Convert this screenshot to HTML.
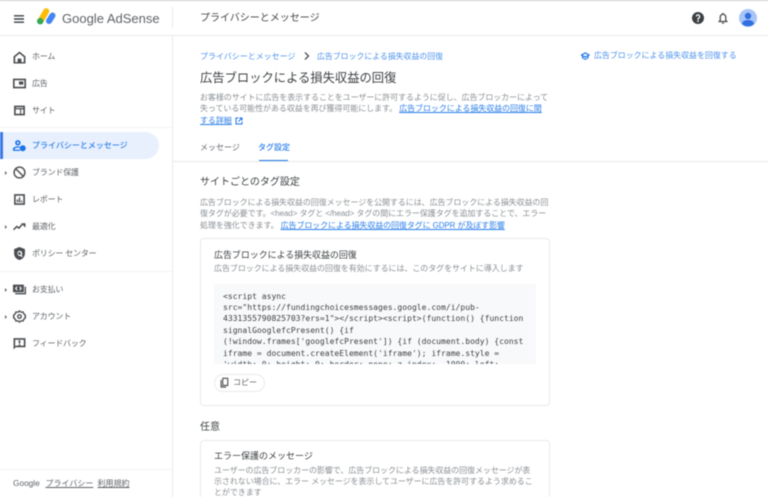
<!DOCTYPE html>
<html lang="ja"><head><meta charset="utf-8">
<style>
html,body{margin:0;padding:0;background:#fff;width:768px;height:497px;overflow:hidden}
body{font-family:"Liberation Sans","Noto Sans CJK JP",sans-serif;color:#5f6368}
#w{position:absolute;left:0;top:0;width:768px;height:497px;overflow:hidden;filter:blur(.5px);background:#fff}
.a{position:absolute;white-space:nowrap;line-height:1}
.l{position:absolute;background:#e8eaed}
.n{font-size:8px;color:#5f6368;left:32px;letter-spacing:-.2px}
.i{position:absolute;left:12.5px;width:13px;height:13px;fill:#4a4d51}
.t{position:absolute;left:5px;width:0;height:0;border-left:2.5px solid #5f6368;border-top:2px solid transparent;border-bottom:2px solid transparent}
.d{font-size:8px;color:#8a8f94;left:200px;letter-spacing:-.07px}
.b{color:#2a7de9}
.u{text-decoration:underline}
.card{position:absolute;left:200px;width:350px;border:1px solid #e8eaed;border-radius:4px;background:#fff;box-sizing:border-box}
pre{margin:0;font-family:"DejaVu Sans Mono","Liberation Mono",monospace;font-size:8.05px;line-height:11.4px;color:#3c4043}
</style></head><body><div id="w">
<div class="l" style="left:0;top:0;width:768px;height:1px;background:#ccc"></div>
<div class="l" style="left:0;top:35px;width:768px;height:1px"></div>
<div class="l" style="left:172px;top:36px;width:1px;height:461px"></div>
<div class="l" style="left:172px;top:7px;width:1px;height:21px"></div>

<svg style="position:absolute;left:14px;top:14.500px" width="10.400" height="8" viewBox="0 0 10.400 8"><path d="M0 .8h10.400M0 4h10.400M0 7.200h10.400" stroke="#3c4043" stroke-width="1.400"/></svg>
<svg style="position:absolute;left:36px;top:8px" width="21" height="17" viewBox="0 0 21 17"><path d="M4.500 13 10.200 3.200" stroke="#fbbc04" stroke-width="6" stroke-linecap="round"/><circle cx="4.200" cy="13.200" r="3.200" fill="#34a853"/><path d="M13 13 16.500 7.500" stroke="#4285f4" stroke-width="6" stroke-linecap="round"/></svg>
<div class="a" style="left:62px;top:11.500px;font-size:13px;color:#5f6368;letter-spacing:0">Google AdSense</div>
<div class="a" style="left:200px;top:14px;font-size:10px;color:#3c4043">プライバシーとメッセージ</div>

<svg style="position:absolute;left:692px;top:12px" width="12" height="12" viewBox="0 0 24 24"><path fill="#3c4043" d="M12 0a12 12 0 1 0 0 24 12 12 0 0 0 0-24zm1.500 20h-3v-3h3zm2.400-8.200-1 1c-.8.8-1.400 1.500-1.400 2.700h-3v-.6c0-1.200.6-2.300 1.400-3l1.500-1.500c.4-.4.600-.8.600-1.400a2 2 0 0 0-4 0H7.500a4.500 4.500 0 0 1 9 0c0 1-.2 2-.6 2.800z"/></svg>
<svg style="position:absolute;left:717px;top:12px" width="12" height="13" viewBox="0 0 24 24"><path fill="none" stroke="#4a4d51" stroke-width="2.600" d="M12 3.500c-3.300 0-5.500 2.500-5.500 6v6L4.500 18h15l-2-2.500v-6c0-3.500-2.200-6-5.500-6z"/><path fill="#4a4d51" d="M9.500 20h5a2.500 2.500 0 0 1-5 0zM10.500 1h3v3h-3z"/></svg>
<svg style="position:absolute;left:739px;top:9px" width="18" height="18" viewBox="0 0 18 18"><circle cx="9" cy="9" r="9" fill="#a8c5f7"/><circle cx="9" cy="7" r="3.200" fill="#2f6fde"/><path d="M3 15c.5-3 3-4 6-4s5.500 1 6 4a9 9 0 0 1-12 0z" fill="#2f6fde"/></svg>

<!-- Sidebar -->
<div class="l" style="left:0;top:127px;width:172px;height:1px;background:#f1f3f4"></div>
<div class="l" style="left:0;top:271px;width:172px;height:1px;background:#f1f3f4"></div>
<div class="l" style="left:0;top:469px;width:172px;height:1px;background:#f1f3f4"></div>
<div style="position:absolute;left:0;top:132px;width:159px;height:27px;background:#e8f0fe;border-radius:0 14px 14px 0"></div>
<div style="position:absolute;left:0;top:132px;width:3px;height:27px;background:#3b78e7"></div>

<svg class="i" style="top:50.500px" viewBox="0 0 24 24"><path d="M12 1 1 10v13h22V10zm8 19.500h-4.500V14h-7v6.500H4v-9.300l8-6.700 8 6.700z"/></svg>
<div class="a n" style="top:53px">ホーム</div>
<svg class="i" style="top:77px" viewBox="0 0 24 24"><path d="M0 3h24v18H0zm3 3v12h18V6zm8 2h8v6h-8z"/></svg>
<div class="a n" style="top:80px">広告</div>
<svg class="i" style="top:104px" viewBox="0 0 24 24"><path d="M2 3h20v18H2zm3 7v8h8v-8zm10 0v8h4v-8zM5 6v1.500h14V6z"/></svg>
<div class="a n" style="top:107px">サイト</div>
<svg class="i" style="top:139px;fill:#1a73e8" viewBox="0 0 24 24"><path d="M9 2a5 5 0 1 1 0 10A5 5 0 0 1 9 2zm0 3a2 2 0 1 0 0 4 2 2 0 0 0 0-4zM0 22v-4c0-3 5-4.500 9-4.500 1.500 0 2.500.2 3.500.5v2.500C11.500 16.200 10.500 16 9 16c-3 0-6 1.300-6 2.500v1h10V22z"/><circle cx="18" cy="17" r="5.500"/></svg>
<div class="a n b" style="top:142px;font-weight:500;letter-spacing:0">プライバシーとメッセージ</div>
<div class="t" style="top:171px"></div>
<svg class="i" style="top:166px" viewBox="0 0 24 24"><circle cx="12" cy="12" r="10" fill="none" stroke="#4a4d51" stroke-width="2.600"/><path d="M5 5l14 14" stroke="#4a4d51" stroke-width="2.600"/></svg>
<div class="a n" style="top:169px">ブランド保護</div>
<svg class="i" style="top:193px" viewBox="0 0 24 24"><path d="M2 2h20v20H2zm3 3v14h14V5zm2 7h2.500v5H7zm3.800-4h2.500v9h-2.500zm3.800 6h2.500v3h-2.500z"/></svg>
<div class="a n" style="top:196px">レポート</div>
<div class="t" style="top:225px"></div>
<svg class="i" style="top:220px" viewBox="0 0 24 24"><path d="m1 18 6-6 4 3 6-7" fill="none" stroke="#4a4d51" stroke-width="2.800"/><path d="M15 6h8v8z"/></svg>
<div class="a n" style="top:223px">最適化</div>
<svg class="i" style="top:247px" viewBox="0 0 24 24"><path fill-rule="evenodd" d="M12 0 2 4v8c0 6 4.300 10.500 10 12 5.700-1.500 10-6 10-12V4zm0 7a5 5 0 0 1 3.800 8.300l2.200 2.200-1.500 1.500-2.200-2.200A5 5 0 1 1 12 7zm0 2.500a2.500 2.500 0 1 0 0 5 2.500 2.500 0 0 0 0-5z"/></svg>
<div class="a n" style="top:250px">ポリシー センター</div>
<div class="t" style="top:288px"></div>
<svg class="i" style="top:283px" viewBox="0 0 24 24"><path fill-rule="evenodd" d="M0 3h20v14H0zm7 3-3.500 4L7 14l1.500-1.300L6.200 10l2.300-2.700zm6 0-1.500 1.300 2.300 2.700-2.300 2.700L13 14l3.500-4zM21.500 7H24v14H4v-2.500h17.500z"/></svg>
<div class="a n" style="top:286px">お支払い</div>
<div class="t" style="top:315px"></div>
<svg class="i" style="top:310px" viewBox="0 0 24 24"><path fill-rule="evenodd" d="m12 0 3.200 2.800 4.100-.6 1.600 3.900L24 9v6l-3.100 2.900-1.600 3.900-4.100-.6L12 24l-3.200-2.800-4.100.6-1.600-3.900L0 15V9l3.100-2.900 1.600-3.900 4.100.6zm0 3.200L9.700 5.300l-3.300-.4-1.300 3L2.700 10v4l2.400 2.100 1.300 3 3.300-.4 2.300 2.100 2.300-2.100 3.300.4 1.300-3 2.400-2.100v-4l-2.400-2.100-1.300-3-3.300.4zM12 7.500a4.500 4.500 0 1 1 0 9 4.500 4.500 0 0 1 0-9zm0 2.500a2 2 0 1 0 0 4 2 2 0 0 0 0-4z"/></svg>
<div class="a n" style="top:313px">アカウント</div>
<svg class="i" style="top:337px" viewBox="0 0 24 24"><path fill-rule="evenodd" d="M1 2h22v17H5l-4 4zm3 3v12.500L5 16h15V5zm6.500 1h3v6h-3zm0 7.500h3V16h-3z"/></svg>
<div class="a n" style="top:340px">フィードバック</div>
<div class="a" style="left:13px;top:479px;font-size:8.300px;color:#5f6368">Google</div>
<div class="a u" style="left:45.500px;top:480px;font-size:8px;color:#5f6368">プライバシー</div>
<div class="a u" style="left:97.500px;top:480px;font-size:8px;color:#5f6368">利用規約</div>

<!-- Main header -->
<div class="a b" style="left:200px;top:52.500px;font-size:8px;letter-spacing:-.02px;opacity:.85">プライバシーとメッセージ</div>
<svg style="position:absolute;left:304px;top:52px" width="6" height="8" viewBox="0 0 6 8"><path d="m1 .5 3.500 3.500L1 7.500" fill="none" stroke="#4a4d51" stroke-width="1.300"/></svg>
<div class="a b" style="left:317px;top:52.500px;font-size:7.900px;opacity:.85">広告ブロックによる損失収益の回復</div>
<svg style="position:absolute;left:580px;top:51px" width="10.500" height="10" viewBox="0 0 24 24"><path fill="#1a73e8" d="M12 3 0 9.500l4 2.200V17l8 4.500 8-4.500v-5.300l4-2.200zm0 3.200L18.500 9.500 12 13 5.500 9.500zM6.500 13.500 12 16.500l5.500-3v2.400L12 19l-5.500-3.100z"/></svg>
<div class="a b" style="left:594px;top:52px;font-size:7.950px;opacity:.85">広告ブロックによる損失収益を回復する</div>
<div class="a" style="left:200px;top:71.500px;font-size:12.300px;color:#3c4043">広告ブロックによる損失収益の回復</div>
<div class="a d" style="top:94px">お客様のサイトに広告を表示することをユーザーに許可するように促し、広告ブロッカーによって</div>
<div class="a d" style="top:105px">失っている可能性がある収益を再び獲得可能にします。 <span class="b u">広告ブロックによる損失収益の回復に関</span></div>
<div class="a d b u" style="top:117px">する詳細</div>
<svg style="position:absolute;left:235px;top:116.500px" width="8" height="8" viewBox="0 0 24 24"><path d="M10 3H3v18h18v-7M13 3h8v8M21 3 10 14" fill="none" stroke="#1a73e8" stroke-width="3"/></svg>
<div class="a" style="left:200px;top:144px;font-size:8px;color:#5f6368">メッセージ</div>
<div class="a b" style="left:258px;top:144px;font-size:8px;font-weight:500">タグ設定</div>
<div style="position:absolute;left:259px;top:159.500px;width:29px;height:2px;background:#1a73e8"></div>
<div class="l" style="left:173px;top:161px;width:595px;height:1px"></div>

<!-- Section -->
<div class="a" style="left:200px;top:178px;font-size:10px;color:#3c4043">サイトごとのタグ設定</div>
<div class="a d" style="top:198.500px">広告ブロックによる損失収益の回復メッセージを公開するには、広告ブロックによる損失収益の回</div>
<div class="a d" style="top:210px">復タグが必要です。&lt;head&gt; タグと &lt;/head&gt; タグの間にエラー保護タグを追加することで、エラー</div>
<div class="a d" style="top:221.500px">処理を強化できます。 <span class="b u" style="letter-spacing:-.1px">広告ブロックによる損失収益の回復タグに GDPR が及ぼす影響</span></div>

<div class="card" style="top:238px;height:167.500px"></div>
<div class="a" style="left:214px;top:250.500px;font-size:8.950px;color:#3c4043">広告ブロックによる損失収益の回復</div>
<div class="a d" style="left:214px;top:265px;letter-spacing:-.06px">広告ブロックによる損失収益の回復を有効にするには、このタグをサイトに導入します</div>
<div style="position:absolute;left:214px;top:284px;width:322px;height:80px;background:#f8f9fa;overflow:hidden">
<pre style="position:absolute;left:9px;top:6.500px">&lt;script async
src="https://fundingchoicesmessages.google.com/i/pub-
4331355790825703?ers=1"&gt;&lt;/script&gt;&lt;script&gt;(function() {function
signalGooglefcPresent() {if
(!window.frames['googlefcPresent']) {if (document.body) {const
iframe = document.createElement('iframe'); iframe.style =
'width: 0; height: 0; border: none; z-index: -1000; left:</pre>
</div>
<div style="position:absolute;left:214px;top:373.500px;width:51px;height:18px;border:1px solid #e8eaed;border-radius:10px;box-sizing:border-box"></div>
<svg style="position:absolute;left:218.500px;top:377px" width="10" height="11" viewBox="0 0 24 24"><path d="M9 2h12v17H9zM5 6v17h12" fill="none" stroke="#4a4d51" stroke-width="2.600"/></svg>
<div class="a" style="left:233px;top:379px;font-size:8px;color:#5f6368">コピー</div>

<div class="a" style="left:200px;top:422.500px;font-size:10px;color:#3c4043">任意</div>
<div class="card" style="top:440px;height:80px"></div>
<div class="a" style="left:214px;top:451.500px;font-size:9px;color:#3c4043">エラー保護のメッセージ</div>
<div class="a d" style="left:214px;top:466.500px">ユーザーの広告ブロッカーの影響で、広告ブロックによる損失収益の回復メッセージが表</div>
<div class="a d" style="left:214px;top:477.500px">示されない場合に、エラー メッセージを表示してユーザーに広告を許可するよう求めるこ</div>
<div class="a d" style="left:214px;top:489px">とができます</div>
</div></body></html>
